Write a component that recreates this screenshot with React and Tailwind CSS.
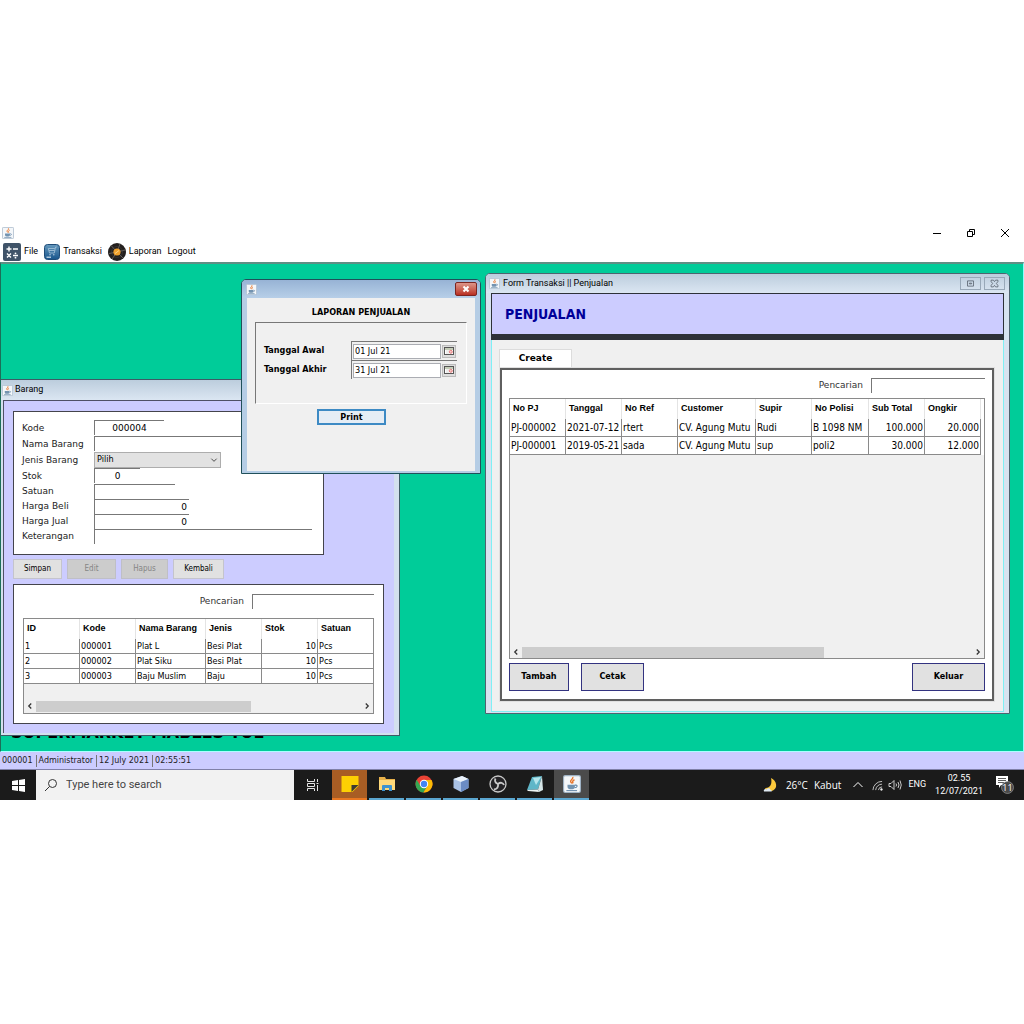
import React, { useState } from 'react';

const JavaIcon = ({ className = 'w-3 h-3' }) => (
  <svg viewBox="0 0 16 16" className={className} aria-hidden="true">
    <rect x="0.5" y="0.5" width="15" height="15" rx="1.5" fill="#f4f7fa" stroke="#9fb2c4" />
    <path d="M8.6 1.8c1.2 1.6-2.6 2.6-1.8 4.2.3.7 1 1 1.2 1.6M10.2 4.2c-1.8.8-2 1.8-1.2 3.2" fill="none" stroke="#e8762c" strokeWidth="1.3" />
    <path d="M4 8.6h6.6v1.8c0 1.5-1 2.2-2.2 2.2H6.2C5 12.6 4 11.9 4 10.4z" fill="#7393b0" />
    <path d="M10.6 9h1c1.5 0 1.3 2.3-1.2 2.3" fill="none" stroke="#5f83a5" strokeWidth="0.9" />
    <path d="M3 13.9h9.5" stroke="#5f83a5" strokeWidth="0.9" />
  </svg>
);

const FileIcon = () => (
  <svg viewBox="0 0 18 18" className="w-[18px] h-[18px]" aria-hidden="true">
    <rect width="18" height="18" rx="2" fill="#3f5368" />
    <path d="M3.5 6h5M6 3.5v5M10 6h5M4 10.5l4 4M8 10.5l-4 4M10 12.5h5" stroke="#fff" strokeWidth="1.4" />
    <circle cx="12.5" cy="10.3" r="0.9" fill="#fff" />
    <circle cx="12.5" cy="14.7" r="0.9" fill="#fff" />
  </svg>
);

const CartIcon = () => (
  <svg viewBox="0 0 16 16" className="w-4 h-4" aria-hidden="true">
    <defs>
      <linearGradient id="cart" x1="0" y1="0" x2="0" y2="1">
        <stop offset="0" stopColor="#6699bd" />
        <stop offset="1" stopColor="#17558c" />
      </linearGradient>
    </defs>
    <rect x="0.5" y="0.5" width="15" height="15" rx="3" fill="url(#cart)" stroke="#1f4c78" />
    <path d="M12.8 3h-1.3l-1.2 6H5.5L4.3 4.5h6.5M5 6.5h5.5" fill="none" stroke="#a9c6dc" strokeWidth="0.8" />
    <circle cx="6" cy="10.8" r="0.8" fill="#a9c6dc" />
    <circle cx="9.8" cy="10.8" r="0.8" fill="#a9c6dc" />
    <path d="M2.5 13.2h4.5" stroke="#d6e4ef" strokeWidth="1.2" />
  </svg>
);

const DiscIcon = () => (
  <svg viewBox="0 0 18 18" className="w-[18px] h-[18px]" aria-hidden="true">
    <circle cx="9" cy="9" r="9" fill="#231f1e" />
    <path d="M9 9L3 2.5M9 9l-8 1.5M9 9L4 16M9 9l3-8M9 9l8-2M9 9l6 6" stroke="#77706c" strokeWidth="0.8" />
    <circle cx="9" cy="9" r="5.5" fill="none" stroke="#47423f" strokeWidth="0.5" />
    <circle cx="9" cy="9" r="3.6" fill="#f0a02c" />
    <path d="M7 10.5l4-3" stroke="#fbd487" strokeWidth="1" />
  </svg>
);

const Glyph = ({ d, className = 'w-3 h-3', width = 1 }) => (
  <svg viewBox="0 0 12 12" className={className} fill="none" stroke="currentColor" strokeWidth={width} aria-hidden="true">
    <path d={d} />
  </svg>
);

const CalendarIcon = () => (
  <svg viewBox="0 0 10 8" className="w-[10px] h-2" aria-hidden="true">
    <rect x="0.5" y="0.5" width="9" height="7" fill="#fff" stroke="#555" />
    <path d="M1 2h8" stroke="#8a9a70" />
    <path d="M2 4h3M2 6h3" stroke="#ccc" strokeWidth="0.7" />
    <circle cx="6.8" cy="4.8" r="1.5" fill="#f6c9c9" stroke="#d66" strokeWidth="0.8" />
  </svg>
);

const menus = [
  { label: 'File', icon: <FileIcon /> },
  { label: 'Transaksi', icon: <CartIcon /> },
  { label: 'Laporan', icon: <DiscIcon /> },
  { label: 'Logout' },
];

const AppHeader = () => (
  <header className="bg-white text-black">
    <div className="flex items-center justify-between h-[18px] px-[2px]">
      <JavaIcon />
      <div className="flex">
        <button aria-label="Minimize" className="w-[34px] flex justify-center"><Glyph d="M2 6.5h8" /></button>
        <button aria-label="Restore" className="w-[34px] flex justify-center"><Glyph d="M2.5 4.5h5v5h-5zM4.5 4.5v-2h5v5h-2" /></button>
        <button aria-label="Close" className="w-[34px] flex justify-center"><Glyph d="M2 2l8 8M10 2l-8 8" /></button>
      </div>
    </div>
    <nav className="flex items-center gap-[6px] h-5 pl-[3px] font-['Roboto',sans-serif] text-[9px]">
      {menus.map((m) => (
        <button key={m.label} className="flex items-center gap-[3px]">
          {m.icon}
          {m.label}
        </button>
      ))}
    </nav>
  </header>
);

const ScrollBar = ({ thumb }) => (
  <div className="flex items-center h-3 bg-[#f0f0f0] text-[#333]">
    <button aria-label="Scroll left" className="w-3 flex justify-center"><Glyph d="M7.5 3l-3 3 3 3" width={1.5} className="w-[10px] h-[10px]" /></button>
    <div className="flex-1 h-[11px]">
      <div className={`h-full bg-[#cdcdcd] ${thumb}`} />
    </div>
    <button aria-label="Scroll right" className="w-3 flex justify-center"><Glyph d="M4.5 3l3 3-3 3" width={1.5} className="w-[10px] h-[10px]" /></button>
  </div>
);

const DataTable = ({ columns, rows, headClass, rowClass, className }) => (
  <table className={`table-fixed border-separate border-spacing-0 bg-white ${className}`}>
    <colgroup>
      {columns.map((c) => <col key={c.name} className={c.width} />)}
    </colgroup>
    <thead>
      <tr className={headClass}>
        {columns.map((c) => (
          <th key={c.name} className="p-0 pl-[3px] text-left font-bold whitespace-nowrap border-r border-[#e4e4e4] font-['Liberation_Sans',sans-serif]">
            {c.name}
          </th>
        ))}
      </tr>
    </thead>
    <tbody>
      {rows.map((row) => (
        <tr key={row.join()} className={rowClass}>
          {row.map((cell, i) => (
            <td
              key={columns[i].name}
              className={`p-0 px-px whitespace-nowrap overflow-hidden border-r border-b border-[#8a8a8a] ${columns[i].right ? 'text-right' : ''}`}
            >
              {cell}
            </td>
          ))}
        </tr>
      ))}
    </tbody>
  </table>
);

const SearchField = ({ id, width }) => (
  <div className="flex items-center justify-end gap-2 font-['DejaVu_Sans',sans-serif] text-[9px]">
    <label htmlFor={id} className="text-[#333]">Pencarian</label>
    <input id={id} className={`h-[15px] px-1 bg-white border-t border-l border-[#777] outline-none ${width}`} />
  </div>
);

const itemColumns = [
  { name: 'ID', width: 'w-[56px]' },
  { name: 'Kode', width: 'w-[56px]' },
  { name: 'Nama Barang', width: 'w-[70px]' },
  { name: 'Jenis', width: 'w-[56px]' },
  { name: 'Stok', width: 'w-[56px]', right: true },
  { name: 'Satuan', width: 'w-[56px]' },
];

const items = [
  ['1', '000001', 'Plat L', 'Besi Plat', '10', 'Pcs'],
  ['2', '000002', 'Plat Siku', 'Besi Plat', '10', 'Pcs'],
  ['3', '000003', 'Baju Muslim', 'Baju', '10', 'Pcs'],
];

const fields = [
  { id: 'kode', label: 'Kode', value: '000004', className: 'w-[70px] text-center' },
  { id: 'nama', label: 'Nama Barang', value: '', className: 'w-[218px]' },
  { id: 'jenis', label: 'Jenis Barang', select: true },
  { id: 'stok', label: 'Stok', value: '0', className: 'w-[46px] text-center' },
  { id: 'satuan', label: 'Satuan', value: '', className: 'w-[81px]' },
  { id: 'beli', label: 'Harga Beli', value: '0', className: 'w-[95px] text-right' },
  { id: 'jual', label: 'Harga Jual', value: '0', className: 'w-[95px] text-right' },
  { id: 'ket', label: 'Keterangan', value: '', className: 'w-[218px]' },
];

const BarangWindow = () => (
  <section className="absolute -left-px top-[115px] w-[400px] bg-[#d3e0ee] border-t border-r border-b border-[#3f5a66] pr-[5px] pb-[2px] pl-[3px]">
    <div className="flex items-center gap-[2px] h-5 -ml-[3px] -mr-[5px] pl-[2px] bg-gradient-to-b from-[#bccddd] to-[#dbe6f2] font-['Roboto',sans-serif] text-[9px]">
      <JavaIcon className="w-[11px] h-[11px]" />
      <h2>Barang</h2>
    </div>
    <div className="bg-[#ccccff] border-t border-l border-[#4f5066] pt-[10px] pl-[9px] pb-[9px]">
      <form className="w-[311px] bg-white border border-[#44444c] pt-2 pb-[10px] pl-2 font-['DejaVu_Sans',sans-serif] text-[9px]">
        <div className="grid grid-cols-[72px_1fr] grid-rows-[repeat(4,16px)_repeat(4,15px)]">
          {fields.map((f) => (
            <React.Fragment key={f.id}>
              <label htmlFor={f.id} className="self-center leading-[15px] text-[#222]">{f.label}</label>
              {f.select ? (
                <div className="relative w-[127px] h-4 font-['DejaVu_Sans_Condensed','DejaVu_Sans',sans-serif]">
                  <select id={f.id} defaultValue="Pilih" className="appearance-none block w-full h-4 pl-[2px] bg-[#e2e2e2] border border-[#adadad]">
                    <option>Pilih</option>
                    <option>Besi Plat</option>
                    <option>Baju</option>
                  </select>
                  <Glyph d="M2 4l4 4 4-4" className="absolute right-[3px] top-1 w-2 h-2 pointer-events-none" />
                </div>
              ) : (
                <input id={f.id} defaultValue={f.value} className={`h-[15px] px-[2px] border-t border-l border-[#777] outline-none ${f.className}`} />
              )}
            </React.Fragment>
          ))}
        </div>
      </form>

      <div className="flex gap-[5px] mt-1 font-['DejaVu_Sans_Condensed','DejaVu_Sans',sans-serif] text-[8px]">
        <button className="w-[49px] h-5 bg-[#e1e1e1] border border-[#c4c4cc]">Simpan</button>
        <button disabled className="w-[49px] h-5 bg-[#cccccc] border border-[#bfbfc6] text-[#858585]">Edit</button>
        <button disabled className="w-[47px] h-5 bg-[#cccccc] border border-[#bfbfc6] text-[#858585]">Hapus</button>
        <button className="w-[51px] h-5 bg-[#e1e1e1] border border-[#c4c4cc]">Kembali</button>
      </div>

      <div className="w-[371px] mt-[5px] bg-white border border-[#44444c] px-[9px] py-[9px]">
        <SearchField id="cari-barang" width="w-[122px]" />
        <div className="mt-[9px] border border-[#8a8a8a] bg-[#f0f0f0] overflow-hidden">
          <DataTable
            columns={itemColumns}
            rows={items}
            className="w-[350px]"
            headClass="h-5 text-[9px]"
            rowClass="h-[15px] text-[9px] leading-[14px] font-['DejaVu_Sans_Condensed','DejaVu_Sans',sans-serif]"
          />
          <div className="mt-4 pb-px">
            <ScrollBar thumb="w-[66%]" />
          </div>
        </div>
      </div>
    </div>
  </section>
);

const DateField = ({ id, label, value }) => (
  <div className="flex items-center">
    <label htmlFor={id} className="w-[87px] font-bold">{label}</label>
    <div className="flex items-center h-[19px] w-[106px] p-px border-t border-l border-[#777]">
      <input id={id} defaultValue={value} className="w-[88px] h-[15px] pl-px bg-white border border-[#abadb3] outline-none" />
      <button aria-label="Pilih tanggal" className="w-[14px] h-[13px] ml-px flex items-center justify-center bg-[#ddd] border border-[#bbb]">
        <CalendarIcon />
      </button>
    </div>
  </div>
);

const LaporanDialog = ({ onClose }) => (
  <section className="absolute left-[240px] top-[15px] w-[240px] rounded-t-[5px] bg-[#b5cde5] border border-[#20505a] px-[5px] pb-[2px] font-['DejaVu_Sans_Condensed','DejaVu_Sans',sans-serif] text-[9px]">
    <div className="flex items-center justify-between h-[18px] -mx-[5px] pl-1 pr-[3px] rounded-t-[4px] bg-gradient-to-b from-[#97b3d5] to-[#b7cfe8]">
      <JavaIcon className="w-[11px] h-[11px]" />
      <button
        aria-label="Close"
        onClick={onClose}
        className="w-[22px] h-[14px] flex items-center justify-center rounded-[2px] border border-[#7c2520] bg-gradient-to-b from-[#dc9589] to-[#b92c20] text-white"
      >
        <Glyph d="M3 3l6 6M9 3l-6 6" width={2.5} className="w-[10px] h-[10px]" />
      </button>
    </div>
    <div className="h-[173px] bg-[#f0f0f0] px-2 pt-2">
      <h2 className="text-center font-bold leading-[12px]">LAPORAN PENJUALAN</h2>
      <div className="mt-1 h-[82px] pt-[18px] pl-[8px] border border-t-[#777] border-l-[#777] border-r-white border-b-white">
        <DateField id="awal" label="Tanggal Awal" value="01 Jul 21" />
        <DateField id="akhir" label="Tanggal Akhir" value="31 Jul 21" />
      </div>
      <button className="block w-[69px] h-4 mt-[5px] ml-[62px] border-2 border-[#3d8ac4] bg-[#e5edf5] font-bold leading-[12px]">Print</button>
    </div>
  </section>
);

const saleColumns = [
  { name: 'No PJ', width: 'w-[56px]' },
  { name: 'Tanggal', width: 'w-[56px]' },
  { name: 'No Ref', width: 'w-[56px]' },
  { name: 'Customer', width: 'w-[78px]' },
  { name: 'Supir', width: 'w-[56px]' },
  { name: 'No Polisi', width: 'w-[57px]' },
  { name: 'Sub Total', width: 'w-[56px]', right: true },
  { name: 'Ongkir', width: 'w-[56px]', right: true },
];

const sales = [
  ['PJ-000002', '2021-07-12', 'rtert', 'CV. Agung Mutu', 'Rudi', 'B 1098 NM', '100.000', '20.000'],
  ['PJ-000001', '2019-05-21', 'sada', 'CV. Agung Mutu', 'sup', 'poli2', '30.000', '12.000'],
];

const PenjualanWindow = () => (
  <section className="absolute left-[484px] top-[9px] w-[525px] rounded-t-[5px] bg-[#d7e3f0] border border-[#4d6470] px-[5px] pb-px">
    <div className="flex items-center gap-[3px] h-[19px] -mx-[5px] pl-[3px] pr-[4px] rounded-t-[4px] bg-gradient-to-b from-[#bccddd] to-[#dbe6f2] font-['Roboto',sans-serif] text-[9px]">
      <JavaIcon className="w-[11px] h-[11px]" />
      <h2 className="flex-1">Form Transaksi || Penjualan</h2>
      <button aria-label="Maximize" className="w-[21px] h-[13px] flex items-center justify-center border border-[#98a8b8] text-[#505a66]">
        <Glyph d="M2 2.5h8v7H2zM4.5 5.5h3v1h-3z" className="w-[9px] h-[9px]" />
      </button>
      <button aria-label="Close" className="w-[21px] h-[13px] flex items-center justify-center border border-[#98a8b8] text-[#505a66]">
        <Glyph d="M1.5 1.5h3L6 3.5l1.5-2h3v2L8.5 6l2 2.5v2h-3L6 8.5l-1.5 2h-3v-2L3.5 6l-2-2.5z" className="w-[9px] h-[9px]" />
      </button>
    </div>
    <div className="h-[47px] flex items-center pl-[13px] bg-[#ccccff] border-t border-x border-b-[6px] border-[#2d3138]">
      <h1 className="font-['DejaVu_Sans_Condensed','DejaVu_Sans',sans-serif] text-[14px] font-bold text-[#000099]">PENJUALAN</h1>
    </div>
    <div className="bg-[#f0f0f0] border border-t-0 border-[#7ff0f5] pl-[7px] pr-2 pt-[9px] pb-[9px]">
      <div role="tablist" className="flex">
        <button role="tab" aria-selected="true" className="w-[73px] h-[18px] bg-white border border-b-0 border-[#dcdcdc] font-['DejaVu_Sans',sans-serif] text-[9px] font-bold">Create</button>
      </div>
      <div className="border border-[#e0e0e0] bg-white">
        <div className="bg-white border-2 border-[#5f5f5f] px-[7px] py-2">
          <SearchField id="cari-penjualan" width="w-[114px]" />
          <div className="mt-[5px] h-[261px] flex flex-col justify-between border border-[#8a8a8a] bg-[#f0f0f0]">
            <div className="bg-white">
              <DataTable
                columns={saleColumns}
                rows={sales}
                className="w-[471px]"
                headClass="h-5 text-[9px]"
                rowClass="h-[18px] text-[10px] leading-[17px] font-['DejaVu_Sans_Condensed','DejaVu_Sans',sans-serif]"
              />
            </div>
            <ScrollBar thumb="w-[67%]" />
          </div>
          <div className="flex mt-1 font-['DejaVu_Sans_Condensed','DejaVu_Sans',sans-serif] text-[9px] font-bold">
            <button className="w-[60px] h-7 bg-[#e1e1e1] border border-[#333380]">Tambah</button>
            <button className="w-[63px] h-7 ml-3 bg-[#e1e1e1] border border-[#333380]">Cetak</button>
            <button className="w-[73px] h-7 ml-auto bg-[#e1e1e1] border border-[#333380]">Keluar</button>
          </div>
        </div>
      </div>
    </div>
  </section>
);

const StatusBar = () => (
  <footer className="flex items-center h-[18px] bg-[#ccccff] border-b border-[#8080a8] pl-[2px] font-['DejaVu_Sans',sans-serif] text-[8px] text-[#222]">
    {['000001', 'Administrator', '12 July 2021', '02:55:51'].map((s) => (
      <span key={s} className="pr-[3px] mr-[2px] border-r border-[#777] last:border-0 leading-[12px]">{s}</span>
    ))}
  </footer>
);

const StickyNotes = () => (
  <svg viewBox="0 0 18 18" className="w-[18px] h-[18px]">
    <path d="M0.5 1h17v10l-6 6h-11z" fill="#fdd003" />
    <path d="M17.5 10l-7 7v-7z" fill="#3d3a32" />
  </svg>
);

const Explorer = () => (
  <svg viewBox="0 0 18 18" className="w-[18px] h-[18px]">
    <path d="M1 2h6l1 2h9v11H1z" fill="#e8b14a" />
    <path d="M1 5h16v10H1z" fill="#ffd97a" />
    <path d="M4 16v-5q0-1 1-1h8q1 0 1 1v5h-3v-3H7v3z" fill="#3f93cf" />
  </svg>
);

const Chrome = () => (
  <svg viewBox="0 0 18 18" className="w-[18px] h-[18px]">
    <circle cx="9" cy="9" r="8.5" fill="#ea4335" />
    <path d="M1.7 4.7A8.5 8.5 0 0 0 8.5 17.5L12.4 11 9 9 5.5 11z" fill="#34a853" />
    <path d="M8.5 17.5A8.5 8.5 0 0 0 16.5 5H9v4l3.4 2z" fill="#fbbc05" />
    <circle cx="9" cy="9" r="4.2" fill="#fff" />
    <circle cx="9" cy="9" r="3.2" fill="#4285f4" />
  </svg>
);

const Cube = () => (
  <svg viewBox="0 0 18 18" className="w-[18px] h-[18px]">
    <path d="M1.5 4L10 1l6.5 3v9L9 17l-7.5-4z" fill="#a9c2e6" />
    <path d="M1.5 4L10 1l6.5 3L9 7z" fill="#eaf2fb" />
    <path d="M9 7l7.5-3v9L9 17z" fill="#6b8cc4" />
  </svg>
);

const Obs = () => (
  <svg viewBox="0 0 18 18" className="w-[18px] h-[18px]" fill="none" stroke="#c9c9c9">
    <circle cx="9" cy="9" r="8" fill="#242326" strokeWidth="1.3" />
    <path d="M9 9C6 8 5.5 5.5 6.5 3.5M9 9c2.5-2 5-1.5 6 1M9 9c.5 3-1 5-4 5.5" strokeWidth="1.8" />
  </svg>
);

const Notepad = () => (
  <svg viewBox="0 0 18 18" className="w-[18px] h-[18px]">
    <path d="M6 2l10-1-4 13.5L1 15z" fill="#5fb6c8" />
    <path d="M7 3l8-1-5 8z" fill="#b5e6ec" />
    <path d="M16 1l1 14-4 2-1-2.5z" fill="#d6e6e8" />
    <path d="M1 15l11-.5 1 2.5-11-1z" fill="#eef4f4" />
  </svg>
);

const apps = [
  { name: 'Sticky Notes', icon: <StickyNotes />, className: 'bg-[#a85d24] border-[#e87722]' },
  { name: 'File Explorer', icon: <Explorer />, className: 'border-[#5ba7d1]' },
  { name: 'Chrome', icon: <Chrome />, className: 'border-[#5ba7d1]' },
  { name: 'VirtualBox', icon: <Cube />, className: 'border-[#5ba7d1]' },
  { name: 'OBS', icon: <Obs />, className: 'border-[#5ba7d1]' },
  { name: 'Notepad', icon: <Notepad />, className: 'border-[#5ba7d1]' },
  { name: 'Java', icon: <JavaIcon className="w-[18px] h-[18px]" />, className: 'bg-[#4b4b4b] border-[#5ba7d1]' },
];

const Taskbar = () => (
  <div className="flex items-stretch h-[30px] bg-[#1b1b1b] text-white">
    <button aria-label="Start" className="w-9 flex items-center justify-center">
      <svg viewBox="0 0 13 13" className="w-[13px] h-[13px]" fill="#fff"><path d="M0 2l6-1v5H0zM7 1l6-1v6H7zM0 7h6v5l-6-1zM7 7h6v6l-6-1z" /></svg>
    </button>
    <label className="w-[258px] flex items-center gap-2 pl-2 bg-[#f2f2f2] text-[#444]">
      <svg viewBox="0 0 14 14" className="w-[14px] h-[14px]" fill="none" stroke="#333"><circle cx="8.5" cy="5.5" r="4" /><path d="M5.5 8.5L1 13" /></svg>
      <input aria-label="Search" placeholder="Type here to search" className="flex-1 bg-transparent outline-none font-['Roboto',sans-serif] text-[11px] placeholder-[#444]" />
    </label>
    <button aria-label="Task View" className="w-[38px] flex items-center justify-center">
      <svg viewBox="0 0 14 12" className="w-[14px] h-3" fill="none" stroke="#e5e5e5"><path d="M1.5 0v2.5h7V0M1.5 12V9.5h7V12M1.5 4.5h7v3h-7zM11.5 0v3M11.5 6v6M10.5 4.5h2" /></svg>
    </button>
    {apps.map((a) => (
      <button key={a.name} aria-label={a.name} className={`w-[35px] mr-[2px] flex items-center justify-center border-b-2 ${a.className}`}>
        {a.icon}
      </button>
    ))}
    <div className="flex items-center ml-auto pr-[10px] text-[10px]">
      <svg viewBox="0 0 16 16" className="w-4 h-4 mr-[7px]" aria-hidden="true"><path d="M8 1c6 3 7 10 2 12.500C6.500 15 3 13.500 2 11c5 .5 7.500-4 6-10z" fill="#fcc93c" /><path d="M1 14.500c-1-2 1.500-3 2.500-2 1-2 4-1.500 4 .5 1.500 0 1.500 1.500 1 1.500z" fill="#dfe9f2" /></svg>
      <span className="mr-[6px]">26°C</span>
      <span className="mr-[11px]">Kabut</span>
      <Glyph d="M1.5 8L6 3.5 10.5 8" className="w-3 h-3 mr-2" />
      <svg viewBox="0 0 12 12" className="w-[11px] h-[11px] mr-[5px]" fill="none" stroke="#ccc"><path d="M1 11A10 10 0 0 1 11 1.5M4 11a7 7 0 0 1 7-6.5M7 11a4 4 0 0 1 4-3.5" /><circle cx="10.3" cy="10.3" r="1" fill="#fff" /></svg>
      <svg viewBox="0 0 14 12" className="w-[14px] h-3 mr-[6px]" fill="none" stroke="#ddd"><path d="M1 4.5h2l3-3v9l-3-3H1zM8 4.5q1 1.5 0 3M10 3q2 3 0 6M12 1.5q2.5 4.5 0 9" strokeWidth="0.9" /></svg>
      <span className="mr-[9px] font-['Roboto',sans-serif] text-[9px]">ENG</span>
      <div className="mr-[13px] text-center font-['Roboto',sans-serif] text-[9px] leading-[13px]">
        <div>02.55</div>
        <div>12/07/2021</div>
      </div>
      <button aria-label="Notifications">
        <svg viewBox="0 0 18 18" className="w-[18px] h-[18px]">
          <path d="M0 0h12v9H5l-2 3V9H0z" fill="#fff" />
          <path d="M2 2.5h8M2 4.5h8M2 6.5h6" stroke="#333" strokeWidth="0.8" />
          <circle cx="11.5" cy="11.5" r="6" fill="#4a4a4a" stroke="#aaa" strokeWidth="0.6" />
          <text x="11.5" y="14.5" textAnchor="middle" fontSize="9" fill="#fff">11</text>
        </svg>
      </button>
    </div>
  </div>
);

export default function App() {
  const [showReport, setShowReport] = useState(true);

  return (
    <main className="min-h-screen bg-white pt-56 text-black font-['Open_Sans',sans-serif]">
      <AppHeader />
      <div className="relative h-[490px] overflow-hidden bg-[#00cc99] border-t-2 border-l border-r border-b border-t-[#5f8f85] border-l-[#1c6e58] border-r-[#8ff] border-b-[#aff]">
        <div className="absolute left-[10px] bottom-[6px] font-['DejaVu_Sans',sans-serif] text-[16px] leading-[24px] font-bold whitespace-nowrap">
          SUPERMARKET MABLES TUL
        </div>
        <BarangWindow />
        <PenjualanWindow />
        {showReport && <LaporanDialog onClose={() => setShowReport(false)} />}
      </div>
      <StatusBar />
      <Taskbar />
    </main>
  );
}
